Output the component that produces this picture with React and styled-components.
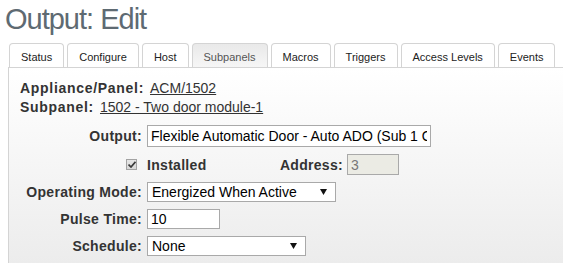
import React from "react";
import styled, { createGlobalStyle } from "styled-components";

const GlobalStyle = createGlobalStyle`
  html, body {
    margin: 0;
    padding: 0;
    background: #fff;
  }

  body {
    font-family: "Liberation Sans", Arial, sans-serif;
    color: #222;
  }
`;

const Page = styled.div`
  width: 563px;
  height: 263px;
  overflow: hidden;
`;

const Title = styled.h1`
  margin: 0;
  padding: 1px 0 0 5px;
  font-family: "Liberation Sans", Arial, sans-serif;
  font-size: 29px;
  letter-spacing: -1px;
  line-height: 36px;
  font-weight: normal;
  color: #5e6a72;
`;

const TabBar = styled.ul`
  display: flex;
  gap: 3px;
  margin: 6px 0 0;
  padding: 0 0 0 9px;
  list-style-type: none;
`;

const Tab = styled.li`
  height: 19px;
  padding: 4px 11px 0;
  border: 1px solid #d4d4d4;
  border-bottom: none;
  border-radius: 4px 4px 0 0;
  font-size: 11px;
  line-height: 19px;
  white-space: nowrap;
  color: ${(props) => (props.$active ? "#555" : "#222")};
  background: ${(props) =>
    props.$active ? "linear-gradient(#e9e9e9, #f6f6f6)" : "#fff"};
`;

const Panel = styled.div`
  margin-left: 8px;
  padding: 11px 0 8px;
  border-top: 1px solid #d4d4d4;
  border-left: 1px solid #d4d4d4;
  background: linear-gradient(#fff, #ececec);
`;

const Info = styled.div`
  padding-left: 11px;
  margin-bottom: 8px;
`;

const InfoLine = styled.div`
  font-size: 14px;
  line-height: 19px;
  color: #333;
`;

const BoldLabel = styled.span`
  font-weight: bold;
  letter-spacing: ${(props) => props.$spacing || 0.3}px;
  color: #333;
`;

const Link = styled.a`
  color: #333;
  text-decoration: underline;
  margin-left: 6px;
`;

const FormGrid = styled.div`
  display: grid;
  grid-template-columns: 133px auto;
  column-gap: 5px;
  row-gap: 7px;
  align-items: center;
`;

const Label = styled.label`
  justify-self: end;
  font-size: 14px;
  font-weight: bold;
  letter-spacing: 0.3px;
  color: #333;
  white-space: nowrap;
`;

const TextInput = styled.input`
  box-sizing: border-box;
  width: ${(props) => props.$width}px;
  height: ${(props) => props.$height || 20}px;
  margin: 0;
  padding: 0 3px;
  border: 1px solid #a9a9a9;
  font-family: "Liberation Sans", Arial, sans-serif;
  font-size: 14px;
  color: ${(props) => (props.disabled ? "#777" : "#000")};
  background: ${(props) => (props.disabled ? "#ebebe4" : "#fff")};
  outline: none;
`;

const FieldWrap = styled.div`
  display: flex;
  align-items: center;
`;

const CheckCell = styled.div`
  justify-self: end;
  margin-right: 5px;
  display: flex;
`;

const CheckBox = styled.span`
  box-sizing: border-box;
  width: 11px;
  height: 11px;
  border: 1px solid #a3a3a3;
  background: linear-gradient(#e6e6e6, #d8d8d8);
  display: flex;
  align-items: center;
  justify-content: center;
`;

const Installed = styled(BoldLabel)`
  width: 116px;
  font-size: 14px;
`;

const AddressLabel = styled(BoldLabel)`
  width: 80px;
  margin-right: 4px;
  text-align: right;
  font-size: 14px;
`;

const SelectBox = styled.div`
  box-sizing: border-box;
  width: ${(props) => props.$width}px;
  height: 20px;
  padding: 0 8px 0 4px;
  border: 1px solid #a9a9a9;
  background: #fff;
  display: flex;
  align-items: center;
  justify-content: space-between;
  font-size: 14px;
  color: #000;
`;

const Check = () => (
  <svg width="8" height="7" viewBox="0 0 8 7">
    <path d="M0.5 3.5 L3 6 L7.5 0.8" fill="none" stroke="#3a3a3a" strokeWidth="1.7" />
  </svg>
);

const Arrow = () => (
  <svg width="7" height="6" viewBox="0 0 7 6">
    <path d="M0 0 H7 L3.5 6 Z" fill="#111" />
  </svg>
);

const Select = ({ width, value }) => (
  <SelectBox $width={width}>
    <span>{value}</span>
    <Arrow />
  </SelectBox>
);

const tabs = [
  "Status",
  "Configure",
  "Host",
  "Subpanels",
  "Macros",
  "Triggers",
  "Access Levels",
  "Events",
];

const App = () => {
  return (
    <Page>
      <GlobalStyle />
      <Title>Output: Edit</Title>
      <TabBar>
        {tabs.map((tab) => (
          <Tab key={tab} $active={tab === "Subpanels"}>
            {tab}
          </Tab>
        ))}
      </TabBar>
      <Panel>
        <Info>
          <InfoLine>
            <BoldLabel $spacing={0.7}>Appliance/Panel:</BoldLabel>
            <Link>ACM/1502</Link>
          </InfoLine>
          <InfoLine>
            <BoldLabel $spacing={0.7}>Subpanel:</BoldLabel>
            <Link>1502 - Two door module-1</Link>
          </InfoLine>
        </Info>
        <FormGrid>
          <Label>Output:</Label>
          <FieldWrap>
            <TextInput
              $width={284}
              $height={22}
              readOnly
              value="Flexible Automatic Door - Auto ADO (Sub 1 Output 1)"
            />
          </FieldWrap>

          <CheckCell>
            <CheckBox>
              <Check />
            </CheckBox>
          </CheckCell>
          <FieldWrap>
            <Installed>Installed</Installed>
            <AddressLabel>Address:</AddressLabel>
            <TextInput $width={52} $height={21} disabled value="3" />
          </FieldWrap>

          <Label>Operating Mode:</Label>
          <FieldWrap>
            <Select width={189} value="Energized When Active" />
          </FieldWrap>

          <Label>Pulse Time:</Label>
          <FieldWrap>
            <TextInput $width={73} readOnly value="10" />
          </FieldWrap>

          <Label>Schedule:</Label>
          <FieldWrap>
            <Select width={159} value="None" />
          </FieldWrap>
        </FormGrid>
      </Panel>
    </Page>
  );
};

export default App;
